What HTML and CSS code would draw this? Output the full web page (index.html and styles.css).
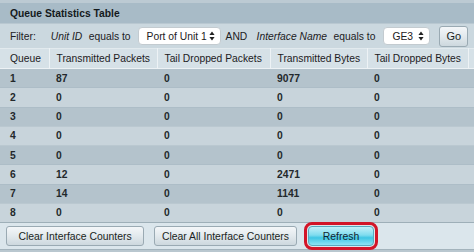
FILE: index.html
```html
<!DOCTYPE html>
<html>
<head>
<meta charset="utf-8">
<link rel="stylesheet" href="styles.css">
</head>
<body>
<div class="panel">
  <div class="topstrip"></div>
  <div class="titlebar">Queue Statistics Table</div>
  <div class="filter">
    <span class="f-label">Filter:</span>
    <span class="f-field f-unit">Unit ID</span>
    <span class="f-eq f-eq1">equals to</span>
    <span class="select sel-port">Port of Unit 1<svg class="arrows" width="6" height="10" viewBox="0 0 6 10"><path d="M3 0.5 L5.6 4 L0.4 4 Z M3 9.5 L5.6 6 L0.4 6 Z" fill="#222"/></svg></span>
    <span class="f-and">AND</span>
    <span class="f-field f-iface">Interface Name</span>
    <span class="f-eq f-eq2">equals to</span>
    <span class="select sel-ge">GE3<svg class="arrows" width="6" height="10" viewBox="0 0 6 10"><path d="M3 0.5 L5.6 4 L0.4 4 Z M3 9.5 L5.6 6 L0.4 6 Z" fill="#222"/></svg></span>
    <span class="btn go">Go</span>
  </div>
  <table class="stats">
    <colgroup>
      <col class="c1"><col class="c2"><col class="c3"><col class="c4"><col class="c5"><col class="c6">
    </colgroup>
    <thead>
      <tr><th>Queue</th><th>Transmitted Packets</th><th>Tail Dropped Packets</th><th>Transmitted Bytes</th><th>Tail Dropped Bytes</th><th></th></tr>
    </thead>
    <tbody>
      <tr><td>1</td><td>87</td><td>0</td><td>9077</td><td>0</td><td></td></tr>
      <tr><td>2</td><td>0</td><td>0</td><td>0</td><td>0</td><td></td></tr>
      <tr><td>3</td><td>0</td><td>0</td><td>0</td><td>0</td><td></td></tr>
      <tr><td>4</td><td>0</td><td>0</td><td>0</td><td>0</td><td></td></tr>
      <tr><td>5</td><td>0</td><td>0</td><td>0</td><td>0</td><td></td></tr>
      <tr><td>6</td><td>12</td><td>0</td><td>2471</td><td>0</td><td></td></tr>
      <tr><td>7</td><td>14</td><td>0</td><td>1141</td><td>0</td><td></td></tr>
      <tr><td>8</td><td>0</td><td>0</td><td>0</td><td>0</td><td></td></tr>
    </tbody>
  </table>
  <div class="actions">
    <span class="btn b-clear">Clear Interface Counters</span>
    <span class="btn b-clearall">Clear All Interface Counters</span>
    <span class="btn b-refresh">Refresh</span>
  </div>
  <div class="bottomstrip"></div>
</div>
</body>
</html>
```

FILE: styles.css
```css
html, body {
  margin: 0;
  padding: 0;
}
body {
  width: 474px;
  height: 252px;
  overflow: hidden;
  background: #c2cfd6;
  font-family: "Liberation Sans", Arial, sans-serif;
  font-size: 10.3px;
  color: #1c2023;
}
.panel {
  width: 474px;
}
.topstrip {
  height: 3px;
  background: #bccad3;
}
.titlebar {
  height: 21px;
  line-height: 21px;
  padding-left: 10px;
  background: #a8bbc7;
  font-weight: bold;
  color: #14191c;
  border-bottom: 1px solid #b9c8d1;
  box-sizing: border-box;
}
.filter {
  height: 24px;
  display: flex;
  align-items: center;
  padding-left: 10px;
  background: #cbd8df;
  white-space: nowrap;
}
.f-field { font-style: italic; }
.f-unit { margin-left: 15px; }
.f-eq1 { margin-left: 6.5px; }
.sel-port { margin-left: 7px; width: 83px; }
.f-and { margin-left: 5px; }
.f-iface { margin-left: 9.3px; }
.f-eq2 { margin-left: 6.6px; }
.sel-ge { margin-left: 8px; width: 47px; }
.select {
  box-sizing: border-box;
  height: 18px;
  display: flex;
  align-items: center;
  justify-content: space-between;
  padding: 0 5px 0 8px;
  background: #ffffff;
  border: 1px solid #c3cbd0;
  border-radius: 4px;
}
.arrows { display: block; }
.btn {
  box-sizing: border-box;
  display: flex;
  align-items: center;
  justify-content: center;
  background: linear-gradient(#f4f7f9, #e2e9ed 50%, #cdd8de);
  border: 1px solid #9aaab3;
  border-radius: 3px;
  color: #1a1f22;
}
.go {
  margin-left: 9px;
  width: 29px;
  height: 21px;
  font-size: 11px;
}
.stats {
  width: 474px;
  border-collapse: collapse;
  table-layout: fixed;
}
.c1 { width: 49px; }
.c2 { width: 108px; }
.c3 { width: 113px; }
.c4 { width: 97px; }
.c5 { width: 101px; }
.c6 { width: 6px; }
.stats th {
  height: 20px;
  padding: 0 0 0 7px;
  text-align: left;
  font-weight: normal;
  background: #d6e1e7;
  border: 1px solid #edf2f5;
  border-top-color: #e2eaee;
  box-sizing: border-box;
  white-space: nowrap;
  overflow: hidden;
}
.stats th:first-child { padding-left: 10px; border-left: none; }
.stats th:last-child { border-right: none; }
.stats td {
  height: 19.25px;
  padding: 0 0 0 7px;
  box-sizing: border-box;
  font-weight: bold;
  color: #23282b;
  border-bottom: 1px solid rgba(160, 178, 188, 0.35);
}
.stats td:first-child { padding-left: 10px; }
.stats tbody tr:nth-child(odd) td { background: #b4c3cc; }
.stats tbody tr:nth-child(even) td { background: #c8d4db; }
.stats tbody tr:last-child td { border-bottom: 1px solid #9eafb8; }
.actions {
  height: 26px;
  display: flex;
  align-items: center;
  padding-left: 6px;
  background: #dbe6ec;
}
.actions .btn {
  height: 20px;
  font-size: 10.4px;
}
.b-clear { width: 138px; }
.b-clearall { width: 143px; margin-left: 10px; }
.b-refresh {
  width: 66px;
  margin-left: 11px;
  background: linear-gradient(#c4f0f9, #7fdcef 45%, #3fc6e4 60%, #8fe2f2);
  border-color: #59a9be;
  outline: 3px solid #d21528;
  outline-offset: 1px;
  border-radius: 4px;
  color: #0f2430;
}
.bottomstrip {
  height: 4px;
  background: #b9c7cf;
  border-top: 1px solid #a3b3bc;
}
```
